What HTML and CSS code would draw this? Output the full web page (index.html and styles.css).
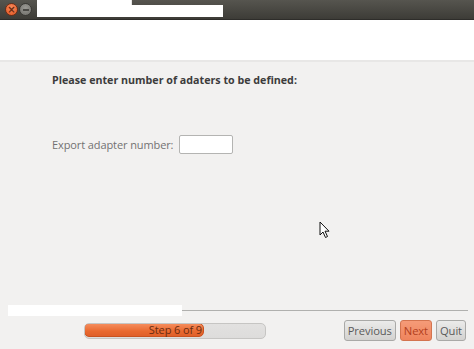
FILE: index.html
```html
<!DOCTYPE html>
<html>
<head>
<meta charset="utf-8">
<link rel="stylesheet" href="styles.css">
</head>
<body>
<div class="window">
  <div class="titlebar">
    <span class="wbtn close"><span class="x">×</span></span>
    <span class="wbtn min"><span class="dash"></span></span>
    <span class="redact-title"></span>
  </div>
  <div class="header"></div>
  <div class="content">
    <p class="heading">Please enter number of adaters to be defined:</p>
    <div class="field">
      <label class="label">Export adapter number:</label>
      <input class="input" type="text">
    </div>
  </div>
  <div class="footer">
    <div class="sepline">
      <span class="redact-status"></span>
      <span class="rule"></span>
    </div>
    <div class="actions">
      <div class="progress">
        <div class="fill" style="width:66.7%"><span>Step 6 of 9</span></div>
      </div>
      <div class="buttons">
        <button class="btn">Previous</button>
        <button class="btn primary">Next</button>
        <button class="btn">Quit</button>
      </div>
    </div>
  </div>
  <svg class="cursor" width="12" height="18" viewBox="0 0 12 18">
    <path d="M1 1 L1 14 L4 11 L6.5 16.5 L8.5 15.5 L6 10.2 L10 10.2 Z" fill="#fff" stroke="#111" stroke-width="1" stroke-linejoin="round"/>
  </svg>
</div>
</body>
</html>
```
FILE: styles.css
```css
* { box-sizing: border-box; }
html, body { margin: 0; padding: 0; }
body {
  width: 474px;
  height: 349px;
  overflow: hidden;
  font-family: "Open Sans", "DejaVu Sans", sans-serif;
  background: #f2f1f0;
}
.window {
  position: relative;
  width: 474px;
  height: 349px;
  display: flex;
  flex-direction: column;
}
.titlebar {
  height: 20px;
  flex: none;
  background: linear-gradient(#56554f, #3d3c37);
  border-bottom: 1px solid #2e2d2a;
  display: flex;
  align-items: flex-start;
  padding-left: 5px;
  gap: 1px;
}
.wbtn {
  width: 13px;
  height: 13px;
  margin-top: 3px;
  border-radius: 50%;
  display: flex;
  align-items: center;
  justify-content: center;
}
.close {
  background: radial-gradient(circle at 50% 35%, #f88b5e, #e2541f);
  border: 1px solid #6a2e18;
}
.close .x {
  color: #6a2a10;
  font-size: 10px;
  line-height: 10px;
  font-weight: bold;
  font-family: "DejaVu Sans", sans-serif;
}
.min {
  background: radial-gradient(circle at 50% 35%, #9a9994, #6e6d68);
  border: 1px solid #3a3935;
}
.min .dash {
  width: 6px;
  height: 2px;
  background: #4a4945;
}
.redact-title {
  width: 186px;
  height: 17px;
  margin-left: 4px;
  background: #fff;
  clip-path: polygon(0 0, 51% 0, 51% 30%, 100% 30%, 100% 100%, 0 100%);
}
.header {
  height: 42px;
  flex: none;
  background: #fff;
  border-bottom: 2px solid #e8e7e6;
}
.content {
  flex: 1;
  background: #f2f1f0;
  padding: 11px 0 0 52px;
}
.heading {
  margin: 0;
  font-size: 10.7px;
  font-weight: bold;
  color: #3c3c3c;
  line-height: 14px;
}
.field {
  margin-top: 48px;
  display: flex;
  align-items: center;
  gap: 6px;
}
.label {
  font-size: 11px;
  color: #727272;
  letter-spacing: -0.1px;
}
.input {
  width: 54px;
  height: 19px;
  border: 1px solid #b4b4b2;
  border-radius: 2px;
  background: #fff;
  margin: 0;
  padding: 0;
}
.footer {
  flex: none;
  height: 45px;
  background: #f2f1f0;
}
.sepline {
  display: flex;
  align-items: center;
  height: 11px;
  margin-top: 1px;
  padding-left: 8px;
  padding-right: 6px;
}
.redact-status {
  width: 174px;
  height: 11px;
  background: #fff;
}
.rule {
  flex: 1;
  height: 1px;
  background: #b0b0ae;
}
.actions {
  display: flex;
  align-items: center;
  padding: 4px 8px 0 84px;
}
.progress {
  width: 182px;
  height: 16px;
  border: 1px solid #c6c5c3;
  border-radius: 5px;
  background: linear-gradient(#e2e1e0, #dddcdb);
  overflow: hidden;
}
.fill {
  height: 100%;
  border: 1px solid #c9521f;
  border-radius: 5px;
  margin: -1px;
  background: linear-gradient(#f58c5c, #e9692f 60%, #e0602a);
  display: flex;
  align-items: center;
  justify-content: flex-end;
  padding-right: 1px;
}
.fill span {
  font-size: 11px;
  color: #6a2c12;
  white-space: nowrap;
  letter-spacing: -0.1px;
}
.buttons {
  margin-left: auto;
  display: flex;
  gap: 4px;
}
.btn {
  height: 21px;
  padding: 0 3px;
  font-family: "Open Sans", "DejaVu Sans", sans-serif;
  font-size: 11.2px;
  color: #5a5a5a;
  border: 1px solid #a9a9a7;
  border-radius: 3px;
  background: linear-gradient(#ebebea, #d3d2d0);
  letter-spacing: -0.1px;
}
.btn.primary {
  color: #b2401c;
  border-color: #d3744f;
  background: linear-gradient(#f59b78, #ef845d);
}
.cursor {
  position: absolute;
  left: 319px;
  top: 221px;
}
```
